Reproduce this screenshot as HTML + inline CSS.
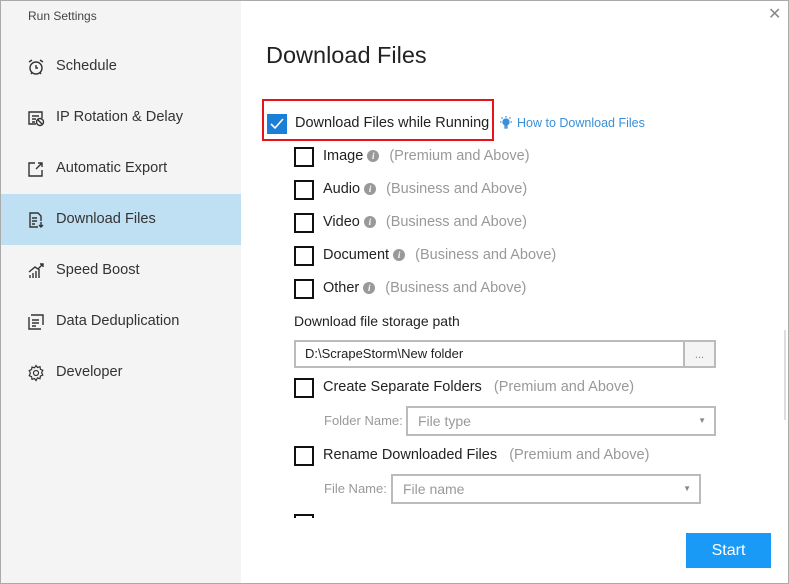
<!DOCTYPE html>
<html><head><style>
*{margin:0;padding:0;box-sizing:border-box}
body{width:789px;height:584px;overflow:hidden;font-family:"Liberation Sans",sans-serif;background:#fff;position:relative}
.win{position:absolute;left:0;top:0;width:789px;height:584px;border:1px solid #aaa}
.side{position:absolute;left:1px;top:1px;width:240px;height:582px;background:#f4f4f4}
.t{position:absolute;left:27px;top:8px;font-size:12px;color:#444}
.it{position:absolute;left:0;width:240px;height:51px;font-size:14.6px;color:#333;line-height:51px;padding-left:55px}
.it.a{background:#bfe0f3}
.it svg{position:absolute;left:26px;top:17px}
.ab{position:absolute}
.cb{position:absolute;width:20px;height:20px;border:2px solid #111;background:#fff}
.lbl{position:absolute;font-size:14.5px;color:#222;white-space:nowrap}
.g{color:#999}
.i{display:inline-block;width:12px;height:12px;border-radius:50%;background:#999;color:#fff;font-size:9px;line-height:12px;text-align:center;font-weight:bold;font-style:italic;vertical-align:1px;margin:0 6px 0 4px;font-family:"Liberation Serif",serif}
.sel{position:absolute;border:2px solid #bbb;font-size:14px;color:#999;padding-left:10px;line-height:26px}
.sel:after{content:"▼";position:absolute;right:8px;top:0;font-size:8px;color:#888}
</style></head><body>
<div class="win"></div>
<div class="side">
<div class="t">Run Settings</div>
<div class="it" style="top:40px"><svg width="18" height="18" viewBox="0 0 18 18" fill="none" stroke="#333" stroke-width="1.4"><circle cx="9" cy="10" r="6"/><path d="M9 7v3h2M2 4l3-2M16 4l-3-2M4 16l1-1.5M14 16l-1-1.5"/></svg>Schedule</div>
<div class="it" style="top:91px"><svg width="18" height="18" viewBox="0 0 18 18" fill="none" stroke="#333" stroke-width="1.4"><path d="M9 15H2V3h13v6"/><path d="M5 7h7M5 10h4M5 13h3"/><circle cx="13" cy="13" r="3.5"/><path d="M11 11l4 4"/></svg>IP Rotation &amp; Delay</div>
<div class="it" style="top:142px"><svg width="18" height="18" viewBox="0 0 18 18" fill="none" stroke="#333" stroke-width="1.4"><path d="M8 3H2v13h13v-6"/><path d="M9 9l6-6M11 3h4v4"/></svg>Automatic Export</div>
<div class="it a" style="top:193px"><svg width="18" height="18" viewBox="0 0 18 18" fill="none" stroke="#333" stroke-width="1.4"><path d="M11 16H3V2h8l3 3v5"/><path d="M5 7h5M5 10h5M5 13h3M14 11v5M12 14l2 2 2-2"/></svg>Download Files</div>
<div class="it" style="top:244px"><svg width="18" height="18" viewBox="0 0 18 18" fill="none" stroke="#333" stroke-width="1.4"><path d="M3 16v-3M6 16v-5M9 16V9M12 16V7M2 10l6-5 3 2 5-5M13 2h3v3"/></svg>Speed Boost</div>
<div class="it" style="top:295px"><svg width="18" height="18" viewBox="0 0 18 18" fill="none" stroke="#333" stroke-width="1.4"><path d="M4 2h12v10M2 4v12h12"/><path d="M5 7h7M5 10h7M5 13h4"/></svg>Data Deduplication</div>
<div class="it" style="top:346px"><svg width="18" height="18" viewBox="0 0 18 18" fill="none" stroke="#333" stroke-width="1.2"><circle cx="9" cy="9" r="2.5"/><path d="M9 1.5l1.5 2 2.5-.8.4 2.6 2.4 1-1.2 2.4 1.2 2.4-2.4 1-.4 2.6-2.5-.8L9 16.5l-1.5-2-2.5.8-.4-2.6-2.4-1L3.4 9 2.2 6.6l2.4-1L5 3l2.5.8z"/></svg>Developer</div>
</div>
<div class="ab" style="left:768px;top:4px;font-size:16px;color:#888">✕</div>
<div class="ab" style="left:784px;top:330px;width:2px;height:90px;background:#ddd"></div>
<div class="lbl" style="left:266px;top:42px;font-size:23.5px;color:#222">Download Files</div>
<div class="ab" style="left:262px;top:99px;width:232px;height:42px;border:2px solid #e8131b"></div>
<div class="ab" style="left:267px;top:114px;width:20px;height:20px;background:#1a7fd6"><svg width="20" height="20"><path d="M4 10l4 4 8-9" fill="none" stroke="#fff" stroke-width="1.6"/></svg></div>
<div class="lbl" style="left:295px;top:115px">Download Files while Running</div>
<svg class="ab" style="left:498px;top:115px" width="16" height="16" viewBox="0 0 16 16" fill="none" stroke="#3a8fd8" stroke-width="1.3"><circle cx="8" cy="7" r="3" fill="#3a8fd8"/><path d="M7 11h2v2H7zM8 1v1.5M2 7h1.5M12.5 7H14M3.5 2.5l1 1M12.5 2.5l-1 1"/></svg>
<div class="lbl" style="left:517px;top:116px;font-size:12.5px;color:#3a8fd8">How to Download Files</div>

<div class="cb" style="left:294px;top:147px"></div><div class="lbl" style="left:323px;top:148px">Image<span class="i">i</span> <span class="g">(Premium and Above)</span></div>
<div class="cb" style="left:294px;top:180px"></div><div class="lbl" style="left:323px;top:181px">Audio<span class="i">i</span> <span class="g">(Business and Above)</span></div>
<div class="cb" style="left:294px;top:213px"></div><div class="lbl" style="left:323px;top:214px">Video<span class="i">i</span> <span class="g">(Business and Above)</span></div>
<div class="cb" style="left:294px;top:246px"></div><div class="lbl" style="left:323px;top:247px">Document<span class="i">i</span> <span class="g">(Business and Above)</span></div>
<div class="cb" style="left:294px;top:279px"></div><div class="lbl" style="left:323px;top:280px">Other<span class="i">i</span> <span class="g">(Business and Above)</span></div>

<div class="lbl" style="left:294px;top:313px;font-size:14px">Download file storage path</div>
<div class="ab" style="left:294px;top:340px;width:422px;height:28px;border:2px solid #bbb;font-size:13px;line-height:24px;padding-left:9px;color:#222">D:\ScrapeStorm\New folder</div>
<div class="ab" style="left:683px;top:340px;width:33px;height:28px;border:2px solid #bbb;background:#f4f4f4;color:#888;font-size:11px;text-align:center;line-height:26px">...</div>

<div class="cb" style="left:294px;top:378px"></div><div class="lbl" style="left:323px;top:379px">Create Separate Folders&nbsp;&nbsp; <span class="g">(Premium and Above)</span></div>
<div class="lbl g" style="left:324px;top:413px;font-size:13px">Folder Name:</div>
<div class="sel" style="left:406px;top:406px;width:310px;height:30px">File type</div>
<div class="cb" style="left:294px;top:446px"></div><div class="lbl" style="left:323px;top:447px">Rename Downloaded Files&nbsp;&nbsp; <span class="g">(Premium and Above)</span></div>
<div class="lbl g" style="left:324px;top:481px;font-size:13px">File Name:</div>
<div class="sel" style="left:391px;top:474px;width:310px;height:30px">File name</div>
<div class="ab" style="left:294px;top:514px;width:20px;height:4px;border:2px solid #111;border-bottom:none"></div>
<div class="ab" style="left:686px;top:533px;width:85px;height:35px;background:#1a9af7;color:#fff;font-size:16px;text-align:center;line-height:35px">Start</div>
</body></html>
